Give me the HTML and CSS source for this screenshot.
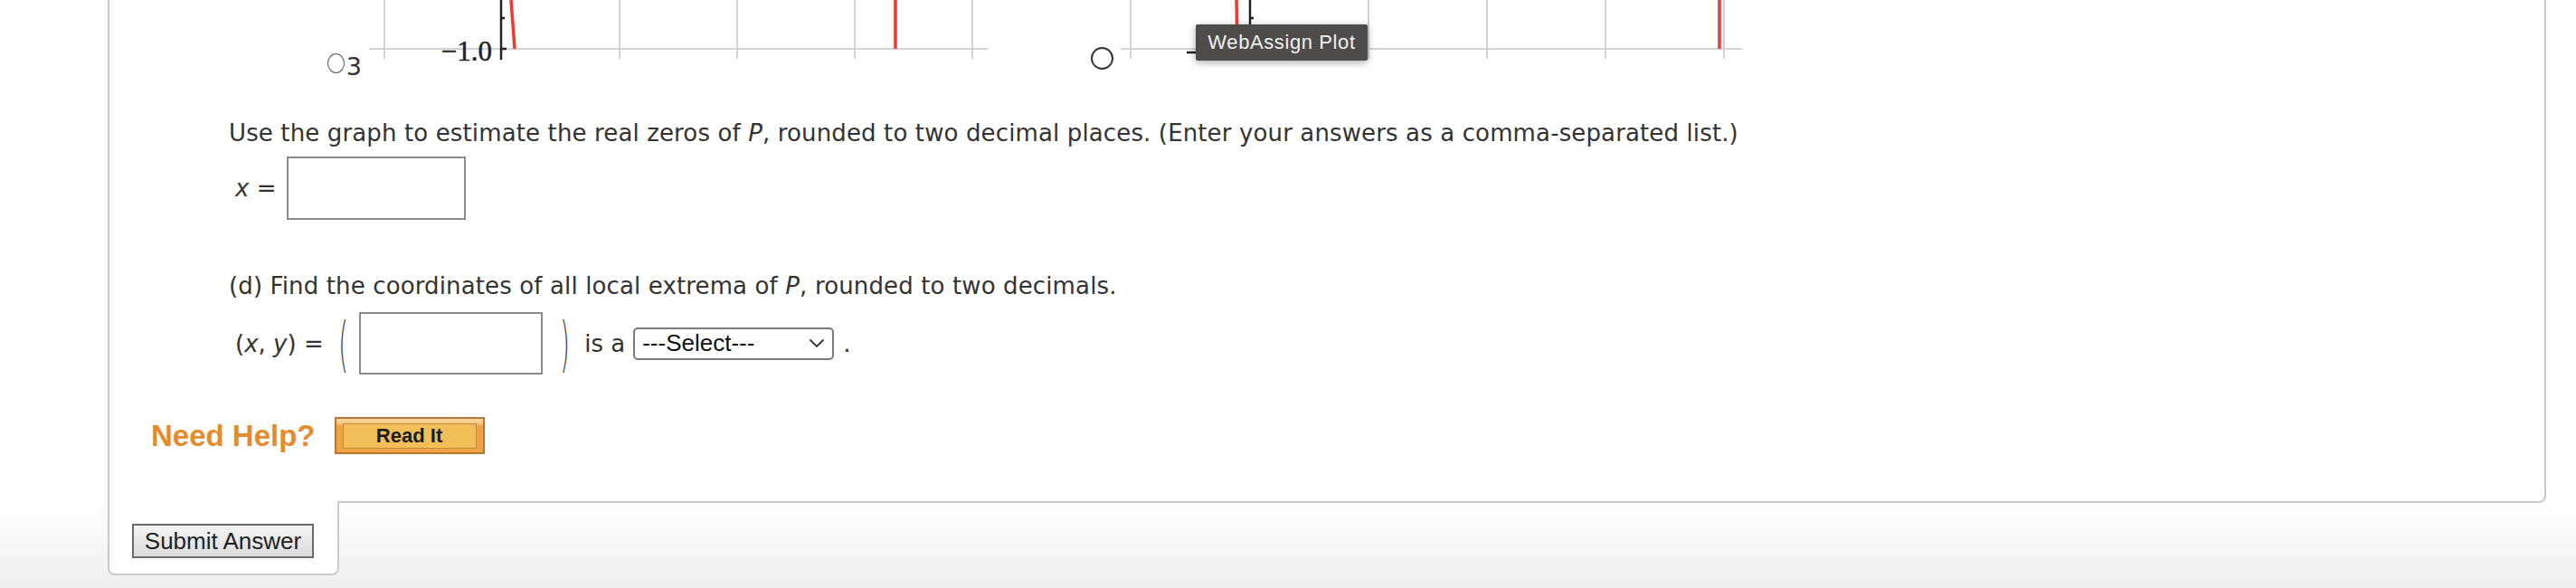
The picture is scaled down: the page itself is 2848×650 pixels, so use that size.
FILE: index.html
```html
<!DOCTYPE html>
<html>
<head>
<meta charset="utf-8">
<link rel="stylesheet" href="styles.css">
</head>
<body>
<div class="card">
  <div class="graphs">
    <div class="opt opt-left"><span class="radio"></span><span class="num">3</span></div>
    <svg class="plot" width="700" height="90" viewBox="0 0 700 90">
      <g stroke="#d2d2d2" stroke-width="2">
        <line x1="25" y1="0" x2="25" y2="65"/>
        <line x1="285" y1="0" x2="285" y2="65"/>
        <line x1="415" y1="0" x2="415" y2="65"/>
        <line x1="545" y1="0" x2="545" y2="65"/>
        <line x1="675" y1="0" x2="675" y2="65"/>
        <line x1="8" y1="54" x2="692" y2="54"/>
      </g>
      <g stroke="#222" stroke-width="2.5">
        <line x1="154" y1="0" x2="154" y2="66"/>
        <line x1="154" y1="54" x2="160" y2="54"/>
        <line x1="154" y1="20" x2="158" y2="20"/>
      </g>
      <g stroke="#ee3a33" stroke-width="3.5">
        <line x1="165" y1="0" x2="169" y2="54"/>
        <line x1="590" y1="0" x2="590" y2="54"/>
      </g>
      <text x="144" y="67" text-anchor="end" class="tick">−1.0</text>
    </svg>
    <div class="opt opt-right"><span class="radio radio-lg"></span></div>
    <div class="plot-wrap">
      <svg class="plot" width="700" height="90" viewBox="0 0 700 90">
        <g stroke="#d2d2d2" stroke-width="2">
          <line x1="13" y1="0" x2="13" y2="65"/>
          <line x1="145" y1="0" x2="145" y2="65"/>
          <line x1="276" y1="0" x2="276" y2="65"/>
          <line x1="407" y1="0" x2="407" y2="65"/>
          <line x1="538" y1="0" x2="538" y2="65"/>
          <line x1="669" y1="0" x2="669" y2="65"/>
          <line x1="2" y1="54" x2="689" y2="54"/>
        </g>
        <g stroke="#222" stroke-width="2.5">
          <line x1="145" y1="0" x2="145" y2="66"/>
          <line x1="145" y1="54" x2="151" y2="54"/>
          <line x1="145" y1="20" x2="149" y2="20"/>
          <line x1="75" y1="58" x2="86" y2="58"/>
        </g>
        <g stroke="#ee3a33" stroke-width="3.5">
          <line x1="130" y1="0" x2="131" y2="54"/>
          <line x1="664" y1="0" x2="664" y2="54"/>
        </g>
      </svg>
      <div class="tooltip">WebAssign Plot</div>
    </div>
  </div>

  <p class="q q-first">Use the graph to estimate the real zeros of <i>P</i>, rounded to two decimal places. (Enter your answers as a comma-separated list.)</p>
  <div class="ans ans-x"><span class="lbl"><i>x</i> =</span><span class="box"></span></div>

  <p class="q q-d">(d) Find the coordinates of all local extrema of <i>P</i>, rounded to two decimals.</p>
  <div class="ans ans-xy">
    <span class="lbl">(<i>x</i>, <i>y</i>) =</span>
    <span class="paren">(</span>
    <span class="box box-xy"></span>
    <span class="paren paren-r">)</span>
    <span class="isa">is a</span>
    <span class="select">---Select---<svg class="chev" width="18" height="11" viewBox="0 0 18 11"><path d="M1.5 1.5 L9 9 L16.5 1.5" fill="none" stroke="#333" stroke-width="1.8"/></svg></span>
    <span class="dot">.</span>
  </div>

  <div class="help">
    <span class="need">Need Help?</span>
    <span class="readit"><span class="readit-in">Read It</span></span>
  </div>
</div>
<div class="tab"><span class="submit">Submit Answer</span></div>
</body>
</html>
```
FILE: styles.css
```css
html, body {
  margin: 0;
  height: 650px;
}
body {
  background: linear-gradient(to bottom, #ffffff 0, #ffffff 556px, #eeeeee 650px);
  font-family: "DejaVu Sans", Verdana, sans-serif;
  color: #333;
  overflow: hidden;
}
.card {
  box-sizing: border-box;
  margin-left: 119px;
  width: 2696px;
  border: 2px solid #c9c9c9;
  border-top: none;
  border-radius: 0 0 8px 0;
  background: #fff;
  padding-bottom: 52px;
}
.graphs {
  display: flex;
  align-items: flex-start;
  height: 90px;
  padding-left: 241px;
}
.opt {
  display: flex;
  align-items: center;
}
.opt-left {
  width: 38px;
  margin-top: 55px;
}
.opt-right {
  width: 31px;
  margin-left: 106px;
  margin-top: 52px;
}
.radio {
  box-sizing: border-box;
  width: 22px;
  height: 22px;
  border: 1.5px solid #555;
  border-radius: 50%;
}
.radio-lg {
  width: 25px;
  height: 25px;
  border-width: 2px;
  border-color: #333;
}
.num {
  font-family: "DejaVu Sans", sans-serif;
  font-size: 27px;
  color: #333;
  margin-left: 2px;
  line-height: 22px;
  margin-top: 8px;
}
.plot {
  display: block;
  flex: none;
}
.tick {
  font-family: "Liberation Serif", serif;
  font-size: 31px;
  fill: #222;
  stroke: #222;
  stroke-width: 0.5px;
}
.plot-wrap {
  position: relative;
}
.tooltip {
  position: absolute;
  left: 85px;
  top: 27px;
  width: 190px;
  height: 40px;
  box-sizing: border-box;
  background: #4e4c4b;
  color: #f0f0f0;
  font-family: "Liberation Sans", Arial, sans-serif;
  font-size: 22px;
  letter-spacing: 0.6px;
  line-height: 40px;
  text-align: center;
  border-radius: 2px;
  box-shadow: 0 2px 8px rgba(0, 0, 0, 0.35);
}
.q {
  margin: 0 0 0 132px;
  font-size: 26px;
  line-height: 36px;
  letter-spacing: 0.13px;
}
.q-first {
  margin-top: 39px;
}
.q-d {
  margin-top: 55px;
}
.ans {
  display: flex;
  align-items: center;
  margin-left: 139px;
  font-size: 26px;
}
.ans-x {
  margin-top: 8px;
}
.ans-xy {
  margin-top: 11px;
}
.lbl {
  white-space: pre;
}
.box {
  box-sizing: border-box;
  display: block;
  width: 198px;
  height: 70px;
  border: 2px solid #8c8c8c;
  background: #fff;
  margin-left: 12px;
}
.box-xy {
  width: 203px;
  height: 69px;
  margin-left: 11px;
}
.paren {
  display: inline-block;
  font-size: 34px;
  color: #444;
  transform: scale(0.8, 1.95);
  margin-left: 15px;
  font-weight: 200;
}
.paren-r {
  margin-left: 18px;
}
.isa {
  margin-left: 15px;
}
.select {
  box-sizing: border-box;
  display: flex;
  align-items: center;
  justify-content: space-between;
  width: 222px;
  height: 36px;
  margin-left: 9px;
  padding: 0 8px 0 8px;
  border: 2px solid #7a7a7a;
  border-radius: 5px;
  font-family: "Liberation Sans", Arial, sans-serif;
  font-size: 26px;
  color: #111;
}
.chev {
  display: block;
}
.dot {
  margin-left: 10px;
}
.help {
  display: flex;
  align-items: center;
  margin: 47px 0 0 46px;
}
.need {
  font-family: "Liberation Sans", Arial, sans-serif;
  font-weight: bold;
  font-size: 33px;
  color: #e68b2d;
}
.readit {
  box-sizing: border-box;
  display: flex;
  align-items: center;
  justify-content: center;
  width: 166px;
  height: 41px;
  margin-left: 21px;
  border: 2px solid #b87634;
  background: linear-gradient(to bottom, #f8d7a3 0, #f5c783 5px, #eea444 8px, #eea444 100%);
}
.readit-in {
  box-sizing: border-box;
  display: block;
  width: 148px;
  height: 28px;
  margin-top: 1px;
  border: 1px solid #c48a3e;
  background: #f3be58;
  font-family: "Liberation Sans", Arial, sans-serif;
  font-weight: bold;
  font-size: 22px;
  line-height: 26px;
  text-align: center;
  color: #1b1b1b;
}
.tab {
  position: relative;
  box-sizing: border-box;
  margin-left: 119px;
  margin-top: -2px;
  width: 256px;
  height: 82px;
  padding: 25px 0 0 25px;
  border: 2px solid #c9c9c9;
  border-top: none;
  border-radius: 0 0 8px 8px;
  background: #fff;
}
.submit {
  box-sizing: border-box;
  display: block;
  width: 201px;
  height: 38px;
  border: 2px solid #6b6b6b;
  background: linear-gradient(to bottom, #f4f4f4, #dcdcdc);
  font-family: "Liberation Sans", Arial, sans-serif;
  font-size: 26px;
  line-height: 34px;
  text-align: center;
  color: #222;
}
```
